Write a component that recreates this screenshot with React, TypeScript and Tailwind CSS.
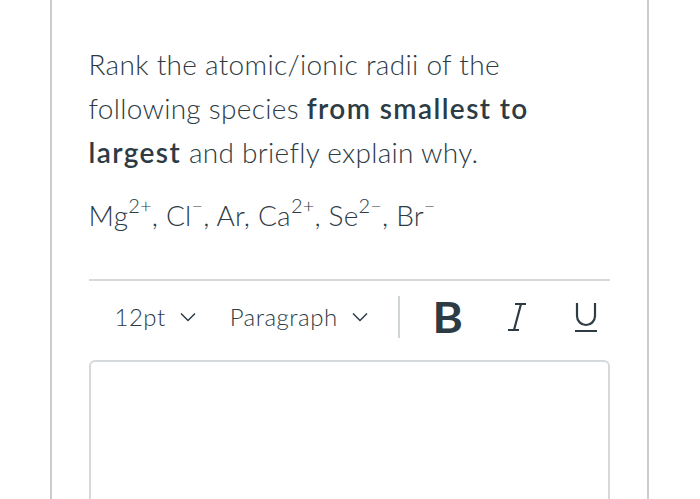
export default function App() {
  return (
    <div className="min-h-screen bg-white flex justify-center" style={{ fontFamily: 'Lato, "Open Sans", sans-serif' }}>
      <div className="w-[599px] ml-[-2px] h-[499px] border-x-2 border-[#c7cdd1] bg-white overflow-hidden">
        <div className="px-[37px] pt-[42px]">
          <p className="text-[28px] leading-[44px] font-light text-[#2d3b45] tracking-[0.3px] whitespace-nowrap">
            Rank the atomic/ionic radii of the
            <br />
            following species <span className="font-semibold tracking-[1.4px]">from smallest to</span>
            <br />
            <span className="font-semibold tracking-[1.4px]">largest</span> and briefly explain why.
          </p>
          <p className="mt-[19px] text-[28px] leading-[44px] font-light text-[#2d3b45] tracking-[0.2px] whitespace-nowrap">
            Mg<sup className="text-[20px] top-[-0.65em]">2+</sup>, Cl<sup className="text-[20px] top-[-0.65em]">−</sup>, Ar, Ca
            <sup className="text-[20px] top-[-0.65em]">2+</sup>, Se<sup className="text-[20px] top-[-0.65em]">2−</sup>, Br
            <sup className="text-[20px] top-[-0.65em]">−</sup>
          </p>
          <div className="mt-[42px] border-t-2 border-[#d5d9dc]" />
          <div className="flex items-center h-[72px] pl-[26px] text-[#2d3b45]">
            <div className="flex items-center gap-[14px] font-light text-[24px] tracking-[0.5px]">
              <span>12pt</span>
              <ChevronDown />
            </div>
            <div className="flex items-center gap-[14px] font-light text-[24px] tracking-[0.5px] ml-[34px]">
              <span>Paragraph</span>
              <ChevronDown />
            </div>
            <div className="w-[2px] h-[42px] bg-[#d0d5d8] ml-[30px]" />
            <span className="ml-[34px] text-[42px] font-bold leading-none text-[#2d3b45] scale-x-110">B</span>
            <svg className="ml-[45px]" width="22" height="30" viewBox="0 0 22 30" fill="none" stroke="#2d3b45" strokeWidth="2.2">
              <path d="M9 2h11M2 28h11M15 2L8 28" />
            </svg>
            <svg className="ml-[46px]" width="24" height="30" viewBox="0 0 24 30" fill="none" stroke="#2d3b45" strokeWidth="2.2">
              <path d="M3 1v13a9 9 0 0 0 18 0V1M1 29h22" />
            </svg>
          </div>
          <div className="mt-[7px] h-[200px] border-2 border-[#d5d9dc] rounded-md" />
        </div>
      </div>
    </div>
  );
}

function ChevronDown() {
  return (
    <svg width="16" height="10" viewBox="0 0 16 10" fill="none" stroke="#2d3b45" strokeWidth="1.5">
      <path d="M1 1.5l7 7 7-7" />
    </svg>
  );
}
